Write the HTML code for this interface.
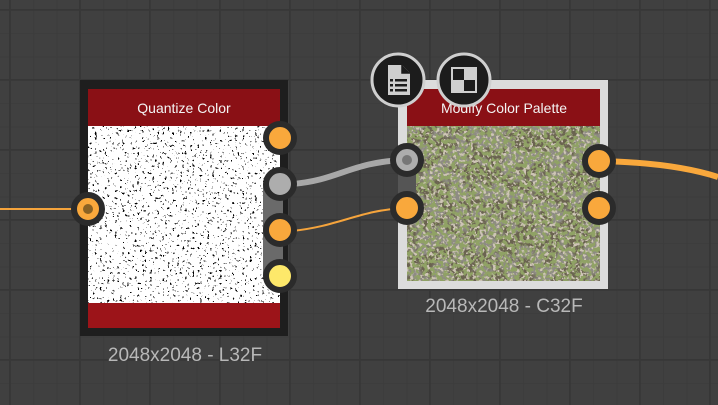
<!DOCTYPE html>
<html><head><style>
html,body{margin:0;padding:0;width:718px;height:405px;overflow:hidden;background:#404040}
</style></head><body>
<svg width="718" height="405" viewBox="0 0 718 405" xmlns="http://www.w3.org/2000/svg" style="position:absolute;left:0;top:0">
<defs>
<pattern id="minor" width="23.33" height="23.33" patternUnits="userSpaceOnUse" x="10" y="10">
<path d="M0 0H23.33M0 0V23.33" stroke="#3b3b3b" stroke-width="1.5" fill="none"/>
</pattern>
<pattern id="major" width="70" height="70" patternUnits="userSpaceOnUse" x="9" y="9">
<path d="M0 0H70M0 0V70" stroke="#373737" stroke-width="3.5" fill="none"/>
</pattern>
<filter id="specks" x="0" y="0" width="100%" height="100%">
<feTurbulence type="fractalNoise" baseFrequency="0.4" numOctaves="2" seed="3"/>
<feColorMatrix type="matrix" values="0 0 0 0 0 0 0 0 0 0 0 0 0 0 0 -40 0 0 0 13"/>
</filter>
<filter id="green" x="0" y="0" width="100%" height="100%">
<feTurbulence type="fractalNoise" baseFrequency="0.25" numOctaves="3" seed="7"/>
<feColorMatrix type="matrix" values="0 0 0 0 0.28  0 0 0 0 0.36  0 0 0 0 0.13  -12 0 0 0 6.3"/>
</filter>
<filter id="dark" x="0" y="0" width="100%" height="100%">
<feTurbulence type="fractalNoise" baseFrequency="0.06" numOctaves="3" seed="11"/>
<feColorMatrix type="matrix" values="0 0 0 0 0.27  0 0 0 0 0.26  0 0 0 0 0.23  0 -8 0 0 4.4"/>
</filter>
<filter id="light" x="0" y="0" width="100%" height="100%">
<feTurbulence type="fractalNoise" baseFrequency="0.3" numOctaves="2" seed="21"/>
<feColorMatrix type="matrix" values="0 0 0 0 0.62  0 0 0 0 0.56  0 0 0 0 0.47  0 0 -10 0 5.0"/>
</filter>
</defs>
<rect width="718" height="405" fill="#404040"/>
<rect width="718" height="405" fill="url(#minor)"/>
<rect width="718" height="405" fill="url(#major)"/>

<path d="M0 209H88" stroke="#f5a43c" stroke-width="2" fill="none"/>
<path d="M292 184C340 180 350 162 405 160" stroke="#a8a8a8" stroke-width="6" fill="none"/>
<path d="M292 231C340 226 360 210 405 208" stroke="#f5a43c" stroke-width="2" fill="none"/>
<path d="M598 161C650 162 690 168 718 177" stroke="#f9a83c" stroke-width="6" fill="none"/>

<rect x="80" y="80" width="208" height="256" fill="#1e1e1e"/>
<rect x="88" y="89" width="192" height="38" fill="#8a1015"/>
<rect x="88" y="126" width="192" height="178" fill="#fff"/>
<rect x="88" y="126" width="192" height="178" filter="url(#specks)"/>
<rect x="88" y="303" width="192" height="25" fill="#9c1419"/>
<text x="184" y="113" fill="#f4f4f4" font-family="Liberation Sans, sans-serif" font-size="14" text-anchor="middle">Quantize Color</text>
<text x="185" y="361" fill="#b8b8b8" font-family="Liberation Sans, sans-serif" font-size="19" text-anchor="middle">2048x2048 - L32F</text>
<rect x="263" y="184" width="20" height="92" fill="#6a6a6a"/>
<g stroke="#2b2b2b" stroke-width="6">
<circle cx="280" cy="138" r="14" fill="#f9a83c"/>
<circle cx="280" cy="184" r="14" fill="#adadad"/>
<circle cx="280" cy="230" r="14" fill="#f9a83c"/>
<circle cx="280" cy="276" r="14" fill="#fde86a"/>
<circle cx="88" cy="209" r="14" fill="#f9a83c"/>
</g>
<circle cx="88" cy="209" r="5" fill="#8a6224"/>

<rect x="398" y="80" width="210" height="209" fill="#dcdcdc"/>
<rect x="407" y="89" width="193" height="38" fill="#8a1015"/>
<rect x="407" y="126" width="193" height="155" fill="#6a6350"/>
<rect x="407" y="126" width="193" height="155" filter="url(#dark)"/>
<rect x="407" y="126" width="193" height="155" filter="url(#light)"/>
<rect x="407" y="126" width="193" height="155" filter="url(#green)"/>
<text x="504" y="113" fill="#f4f4f4" font-family="Liberation Sans, sans-serif" font-size="14" text-anchor="middle">Modify Color Palette</text>
<text x="504" y="312" fill="#b8b8b8" font-family="Liberation Sans, sans-serif" font-size="19" text-anchor="middle">2048x2048 - C32F</text>
<rect x="398" y="160" width="18" height="48" fill="#555"/>
<g stroke="#2b2b2b" stroke-width="6">
<circle cx="407" cy="160" r="14" fill="#adadad"/>
<circle cx="407" cy="208" r="14" fill="#f9a83c"/>
<circle cx="599" cy="161" r="14" fill="#f9a83c"/>
<circle cx="599" cy="208" r="14" fill="#f9a83c"/>
</g>
<circle cx="407" cy="160" r="5" fill="#777"/>

<circle cx="398" cy="80" r="26" fill="#1c1c1c" stroke="#cfcfcf" stroke-width="3"/>
<path d="M388 65H402L410 73V95H388Z" fill="#cfcfcf"/>
<path d="M402 65V73H410" fill="#1c1c1c" stroke="#1c1c1c" stroke-width="1.5"/>
<g fill="#1c1c1c"><rect x="390" y="79" width="3" height="2.5"/><rect x="395" y="79" width="12" height="2.5"/><rect x="390" y="84" width="3" height="2.5"/><rect x="395" y="84" width="12" height="2.5"/><rect x="390" y="89" width="3" height="2.5"/><rect x="395" y="89" width="12" height="2.5"/></g>
<circle cx="464" cy="80" r="26" fill="#1c1c1c" stroke="#cfcfcf" stroke-width="3"/>
<rect x="451" y="67" width="26" height="26" fill="#cfcfcf"/>
<rect x="453" y="69" width="11" height="11" fill="#1c1c1c"/>
<rect x="464" y="80" width="11" height="11" fill="#1c1c1c"/>
</svg>
</body></html>
